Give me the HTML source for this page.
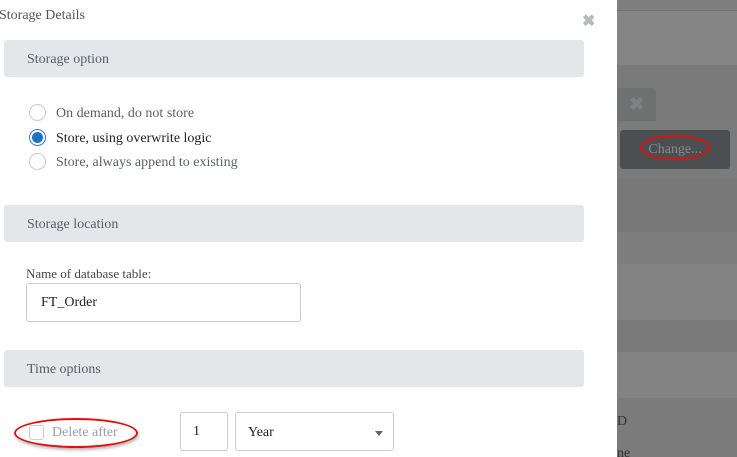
<html><head><style>
html,body{margin:0;width:737px;height:457px;overflow:hidden}
body{position:relative;font-family:"Liberation Serif",serif;background:#7b7b7b}
.d{position:absolute;left:0;top:0;width:617px;height:457px;background:#fff}
.b{position:absolute;left:617px;width:120px}
.h{position:absolute;left:4px;width:580px;height:37px;background:#e4e7ea;border-radius:3px;color:#555d66;font-size:14px;line-height:39px;padding-left:23px;box-sizing:border-box}
.t{position:absolute;font-size:14px;color:#5a6068}
.r{position:absolute;left:29px;width:17px;height:17px;border:1px solid #c8c8c8;border-radius:50%;box-sizing:border-box;background:#fff}
.in{position:absolute;border:1px solid #ccc;border-radius:3px;box-sizing:border-box;background:#fff;font-size:14px;color:#222}
</style></head><body>
<div class="b" style="top:0;height:10px;background:#7e7e7e;border-bottom:1px solid #747474"></div>
<div class="b" style="top:11px;height:54px;background:#858585"></div>
<div class="b" style="top:65px;height:56px;background:#7a7a7a"></div>
<div class="b" style="top:88px;left:617px;width:39px;height:33px;background:#6f7171;border-radius:0 3px 0 0;color:#7d8284;font-size:18px;font-weight:bold;text-align:center;line-height:33px;font-family:'Liberation Sans',sans-serif">✖</div>
<div class="b" style="top:121px;height:57px;background:#7b7b7b"></div>
<div style="position:absolute;left:620px;top:130px;width:110px;height:39px;background:#4b4f52;border-radius:3px;color:#888;font-size:14px;line-height:40px;text-align:center">Change...</div>
<div style="position:absolute;left:640px;top:135px;width:70px;height:25px;border:2px solid #e01010;border-radius:50%;box-sizing:border-box"></div>
<div class="b" style="top:178px;height:54px;background:#787878"></div>
<div class="b" style="top:232px;height:32px;background:#7d7d7d"></div>
<div class="b" style="top:264px;height:56px;background:#838383"></div>
<div class="b" style="top:320px;height:32px;background:#797979"></div>
<div class="b" style="top:352px;height:46px;background:#838383"></div>
<div class="t" style="left:617px;top:414px;color:#333">D</div>
<div class="t" style="left:617px;top:446px;color:#333">ne</div>
<div class="d"></div>
<div class="t" style="left:-1px;top:8px;font-size:14px;color:#555">Storage Details</div>
<div style="position:absolute;left:582px;top:11px;color:#b5babd;font-size:16px;font-weight:bold;font-family:'Liberation Sans',sans-serif">✖</div>
<div class="h" style="top:40px">Storage option</div>
<div class="r" style="top:104px"></div><div class="t" style="left:56px;top:106px">On demand, do not store</div>
<div class="r" style="top:129px;border-color:#3a7cc0"><div style="position:absolute;left:2px;top:2px;width:11px;height:11px;border-radius:50%;background:#1f72c0"></div></div><div class="t" style="left:56px;top:131px;color:#222">Store, using overwrite logic</div>
<div class="r" style="top:153px"></div><div class="t" style="left:56px;top:155px">Store, always append to existing</div>
<div class="h" style="top:205px">Storage location</div>
<div class="t" style="left:26px;top:266px;font-size:13px;color:#444">Name of database table:</div>
<div class="in" style="left:26px;top:283px;width:275px;height:39px;padding:11px 0 0 14px">FT_Order</div>
<div class="h" style="top:350px">Time options</div>
<div style="position:absolute;left:14px;top:418px;width:124px;height:30px;border:2px solid #e01010;border-radius:50%;box-sizing:border-box;box-shadow:1px 2px 3px rgba(0,0,0,.3)"></div>
<div style="position:absolute;left:29px;top:425px;width:15px;height:15px;border:1px solid #ccc;border-radius:3px;box-sizing:border-box"></div>
<div class="t" style="left:52px;top:425px;color:#9aa0a6">Delete after</div>
<div class="in" style="left:180px;top:412px;width:48px;height:39px;padding:11px 0 0 12px">1</div>
<div class="in" style="left:235px;top:412px;width:159px;height:39px;padding:12px 0 0 12px">Year<span style="position:absolute;right:10px;top:18px;border:4px solid transparent;border-top:5px solid #666;border-bottom:0"></span></div>
</body></html>
